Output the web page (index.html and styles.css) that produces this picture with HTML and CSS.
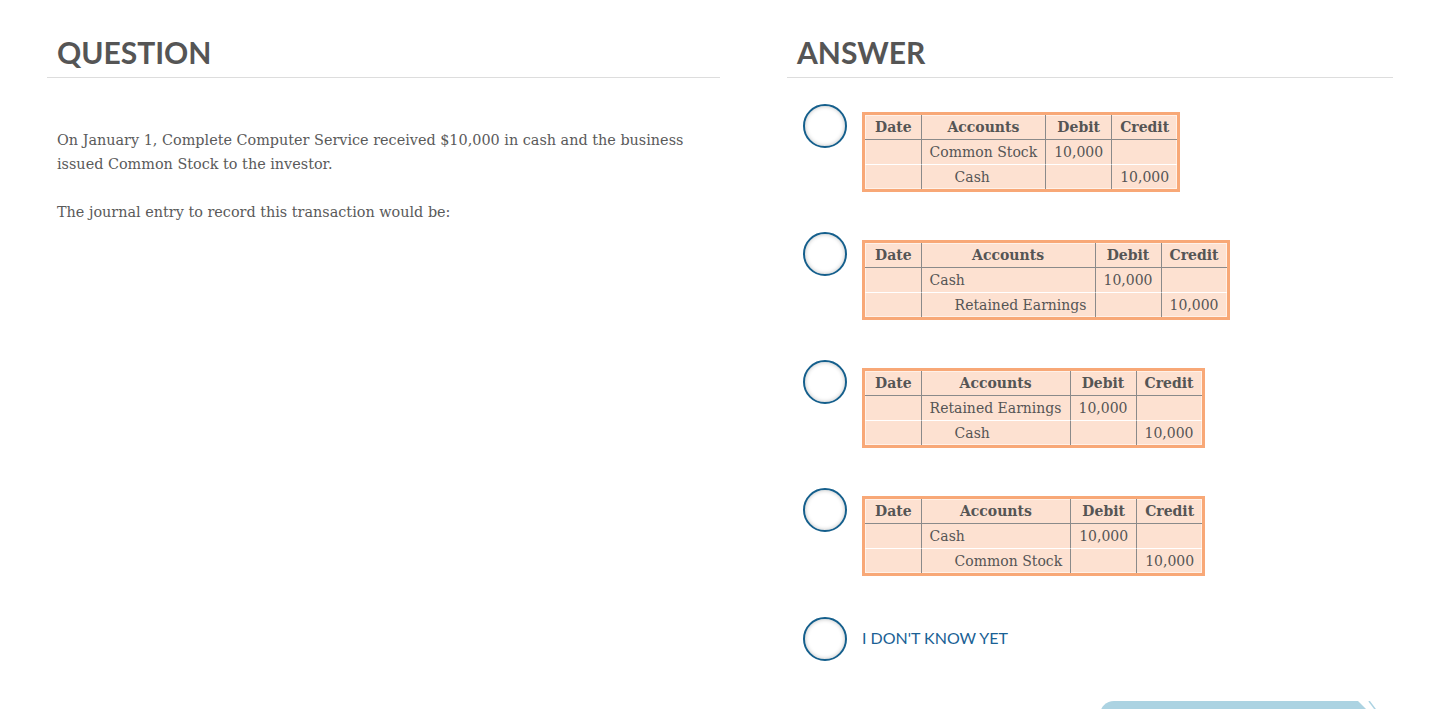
FILE: index.html
```html
<!DOCTYPE html>
<html lang="en">
<head>
    <meta charset="UTF-8">
    <title>Question</title>
    <link rel="stylesheet" href="styles.css">
</head>
<body>
    <div class="page">

        <!-- Question column -->
        <div class="column question-col">
            <h2 class="col-title">QUESTION</h2>
            <div class="question-text">
                <p>On January 1, Complete Computer Service received $10,000 in cash and the business issued Common Stock to the investor.</p>
                <p>The journal entry to record this transaction would be:</p>
            </div>
        </div>

        <!-- Answer column -->
        <div class="column answer-col">
            <h2 class="col-title">ANSWER</h2>

            <div class="option">
                <span class="radio"></span>
                <table class="journal">
                    <tr><th>Date</th><th>Accounts</th><th>Debit</th><th>Credit</th></tr>
                    <tr><td></td><td>Common Stock</td><td>10,000</td><td></td></tr>
                    <tr><td></td><td class="indent">Cash</td><td></td><td>10,000</td></tr>
                </table>
            </div>

            <div class="option">
                <span class="radio"></span>
                <table class="journal">
                    <tr><th>Date</th><th>Accounts</th><th>Debit</th><th>Credit</th></tr>
                    <tr><td></td><td>Cash</td><td>10,000</td><td></td></tr>
                    <tr><td></td><td class="indent">Retained Earnings</td><td></td><td>10,000</td></tr>
                </table>
            </div>

            <div class="option">
                <span class="radio"></span>
                <table class="journal">
                    <tr><th>Date</th><th>Accounts</th><th>Debit</th><th>Credit</th></tr>
                    <tr><td></td><td>Retained Earnings</td><td>10,000</td><td></td></tr>
                    <tr><td></td><td class="indent">Cash</td><td></td><td>10,000</td></tr>
                </table>
            </div>

            <div class="option">
                <span class="radio"></span>
                <table class="journal">
                    <tr><th>Date</th><th>Accounts</th><th>Debit</th><th>Credit</th></tr>
                    <tr><td></td><td>Cash</td><td>10,000</td><td></td></tr>
                    <tr><td></td><td class="indent">Common Stock</td><td></td><td>10,000</td></tr>
                </table>
            </div>

            <div class="option option-plain">
                <span class="radio"></span>
                <span class="dont-know">I DON'T KNOW YET</span>
            </div>

            <div class="submit-row">
                <div class="submit-btn"></div>
                <svg class="submit-edge" width="12" height="20" viewBox="0 0 12 20">
                    <path d="M1 0 L10 12" stroke="#acd3e2" stroke-width="1.5" fill="none"/>
                </svg>
            </div>
        </div>

    </div>
</body>
</html>
```

FILE: styles.css
```css
html, body {
    margin: 0;
    height: 100%;
    overflow: hidden;
}

body {
    background-color: white;
    color: #555555;
    font-family: "DejaVu Serif", serif;
}

.page {
    display: flex;
    gap: 67px;
    padding: 0 47px;
}

.column {
    display: flex;
    flex-direction: column;
}

.question-col {
    width: 673px;
}

.answer-col {
    width: 606px;
}

.col-title {
    font-family: Lato, sans-serif;
    font-weight: 700;
    font-size: 30px;
    color: #555555;
    margin: 0;
    padding: 35px 0 7px 10px;
    line-height: 35px;
    border-bottom: 1px solid #dddddd;
}

.question-text {
    padding: 50px 10px 0;
}

.question-text p {
    font-size: 14.4px;
    line-height: 24px;
    margin: 0 0 24px;
    color: #5a5a5a;
}

/* answer options */

.option {
    display: flex;
    align-items: flex-start;
    gap: 15px;
    height: 128px;
    padding-left: 16px;
}

.answer-col .option:first-of-type {
    margin-top: 26px;
}

.radio {
    flex: none;
    width: 40px;
    height: 40px;
    border: 2px solid #155f8c;
    border-radius: 50%;
    background-color: white;
    box-shadow: inset 0 0 4px rgba(0, 0, 0, 0.25);
}

.journal {
    margin-top: 8px;
    border-collapse: separate;
    border-spacing: 0;
    border: 3px solid #f8a877;
    background-color: #fde1d1;
    box-shadow: inset 0 0 0 1px #fff1e8;
    font-size: 14px;
    color: #555555;
}

.journal th,
.journal td {
    height: 24px;
    padding: 0 8px;
    text-align: left;
    white-space: nowrap;
    border-left: 1px solid #8a8a8a;
    line-height: 24px;
}

.journal th:first-child,
.journal td:first-child {
    border-left: none;
    padding: 0 9px 0 10px;
}

.journal th {
    font-weight: 700;
    text-align: center;
    border-bottom: 1px solid #8a8a8a;
}

.journal tr:nth-child(2) td {
    border-bottom: 1px solid #ffffff;
}

.journal td.indent {
    padding-left: 33px;
}

.option-plain {
    align-items: center;
    height: 46px;
}

.dont-know {
    font-family: Lato, sans-serif;
    font-size: 16px;
    color: #1a6195;
    margin-top: -4px;
}

.submit-row {
    display: flex;
    justify-content: flex-end;
    align-items: flex-start;
    margin-top: 39px;
    padding-right: 13px;
}

.submit-btn {
    width: 278px;
    height: 40px;
    background-color: #acd3e2;
    border-radius: 14px 0 0 0;
    clip-path: polygon(0 0, 258px 0, 100% 50%, 258px 100%, 0 100%);
}

.submit-edge {
    margin-left: -10px;
}
```
